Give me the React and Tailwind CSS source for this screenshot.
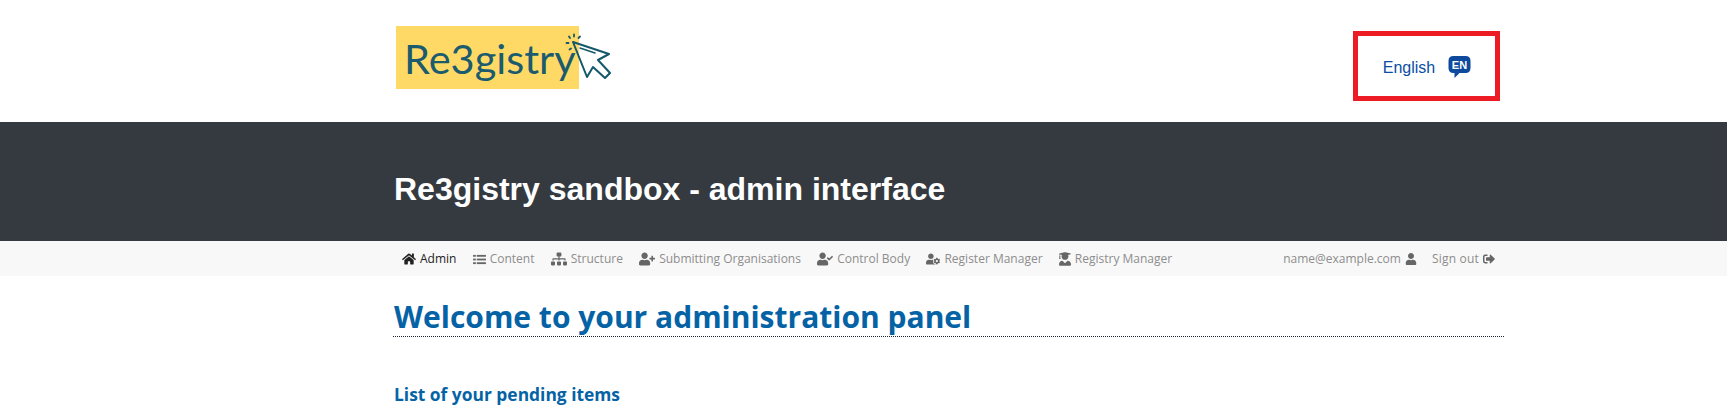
import React from 'react';
import { FaHome, FaSitemap, FaUserPlus, FaUserCheck, FaUserCog, FaUserGraduate, FaUser, FaSignOutAlt } from 'react-icons/fa';

const ListIcon = ({ className }) => (
  <svg viewBox="0 0 14 12" fill="currentColor" className={className}>
    <rect x="0" y="1" width="3" height="2" />
    <rect x="4" y="1" width="10" height="2" />
    <rect x="0" y="5" width="3" height="2" />
    <rect x="4" y="5" width="10" height="2" />
    <rect x="0" y="9" width="3" height="2" />
    <rect x="4" y="9" width="10" height="2" />
  </svg>
);

const navItems = [
  { name: 'Admin', icon: FaHome, size: 'w-[14px] h-[14px]', active: true },
  { name: 'Content', icon: ListIcon, size: 'w-[13px] h-[11px]' },
  { name: 'Structure', icon: FaSitemap, size: 'w-[16px] h-[16px]' },
  { name: 'Submitting Organisations', icon: FaUserPlus, size: 'w-[16px] h-[16px]' },
  { name: 'Control Body', icon: FaUserCheck, size: 'w-[16px] h-[16px]' },
  { name: 'Register Manager', icon: FaUserCog, size: 'w-[14px] h-[14px]' },
  { name: 'Registry Manager', icon: FaUserGraduate, size: 'w-[12px] h-[14px]' },
];

const Logo = () => (
  <div className="flex items-start">
    <div className="w-[183px] h-[63px] bg-[#ffd966] flex items-center pl-[8px] pt-[2px] font-['Lato',sans-serif] text-[41.5px] text-[#1a5c6e] leading-none">
      Re3gistry
    </div>
    <svg width="46" height="48" viewBox="0 0 46 48" fill="none" className="-ml-[14px] mt-[7px]" stroke="#14586a" strokeLinejoin="round" strokeLinecap="round">
      <path d="M8 9 L44 21 L33 27 L45 40 L40 45 L28 34 L22 44 Z" strokeWidth="2" />
      <path d="M15 15 L30 20" strokeWidth="1.4" />
      <path d="M4 3.5 L5 5 M9 1.5 L9 3.5 M15 3.5 L13.5 5 M1.5 10 L3.5 10 M6 15.5 L4.5 16.5" strokeWidth="1.8" />
    </svg>
  </div>
);

export default function App() {
  return (
    <div className="bg-white h-[413px] overflow-hidden font-['Open_Sans',sans-serif]">
      <header className="h-[122px] pl-[393px]">
        <div className="w-[1111px] flex justify-between items-start pl-[3px]">
          <div className="pt-[26px]">
            <Logo />
          </div>
          <div className="mt-[31px] mr-[4px] w-[147px] h-[70px] border-[5px] border-[#ed1c24] flex items-center justify-center gap-[13px] pl-[1px] pt-[3px] font-['Liberation_Sans',sans-serif] text-[16px] text-[#0a4da2]">
            <span>English</span>
            <svg width="23" height="23" viewBox="0 0 22 23">
              <path d="M5 0 H17 Q22 0 22 5 V12 Q22 17 17 17 H11 L6 22 V17 H5 Q0 17 0 12 V5 Q0 0 5 0 Z" fill="#0d4a9e" />
              <text x="11" y="13" textAnchor="middle" fontSize="11" fontWeight="700" fill="#fff" fontFamily="Liberation Sans, sans-serif">EN</text>
            </svg>
          </div>
        </div>
      </header>

      <div className="h-[119px] bg-[#343a40] pl-[393px]">
        <div className="w-[1111px] h-full flex items-center pl-[1px] pt-[14px]">
          <h1 className="font-['Liberation_Sans',sans-serif] font-bold text-[32px] text-white leading-none">Re3gistry sandbox - admin interface</h1>
        </div>
      </div>

      <nav className="h-[35px] bg-[#f8f8f8] pl-[393px] text-[12px] text-[#8d8d8d]">
        <div className="w-[1111px] h-full flex items-center justify-between px-[9px] pt-[1px]">
          <div className="flex items-center gap-[16.25px]">
            {navItems.map((item) => {
              const Icon = item.icon;
              return (
                <span key={item.name} className={`flex items-center gap-[4px] ${item.active ? 'text-[#222222]' : ''}`}>
                  <Icon className={`${item.size} ${item.active ? 'text-[#222222]' : 'text-[#666666]'}`} />
                  {item.name}
                </span>
              );
            })}
          </div>
          <div className="flex items-center gap-[15px]">
            <span className="flex items-center gap-[4px]">name@example.com <FaUser className="text-[12px] text-[#666666]" /></span>
            <span className="flex items-center gap-[4px]"><span className="tracking-[0.2px]">Sign out</span> <FaSignOutAlt className="text-[12px] text-[#666666]" /></span>
          </div>
        </div>
      </nav>

      <main className="pl-[393px]">
        <div className="w-[1111px] font-['Open_Sans',sans-serif]">
          <h2 className="mt-[22px] h-[39px] pl-[1px] border-b border-dotted border-[#1a2433] text-[30px] leading-[38px] font-bold text-[#0563a5]">Welcome to your administration panel</h2>
          <h3 className="mt-[45px] pl-[1px] text-[17.4px] font-bold leading-[24px] text-[#0563a5]">List of your pending items</h3>
        </div>
      </main>
    </div>
  );
}
